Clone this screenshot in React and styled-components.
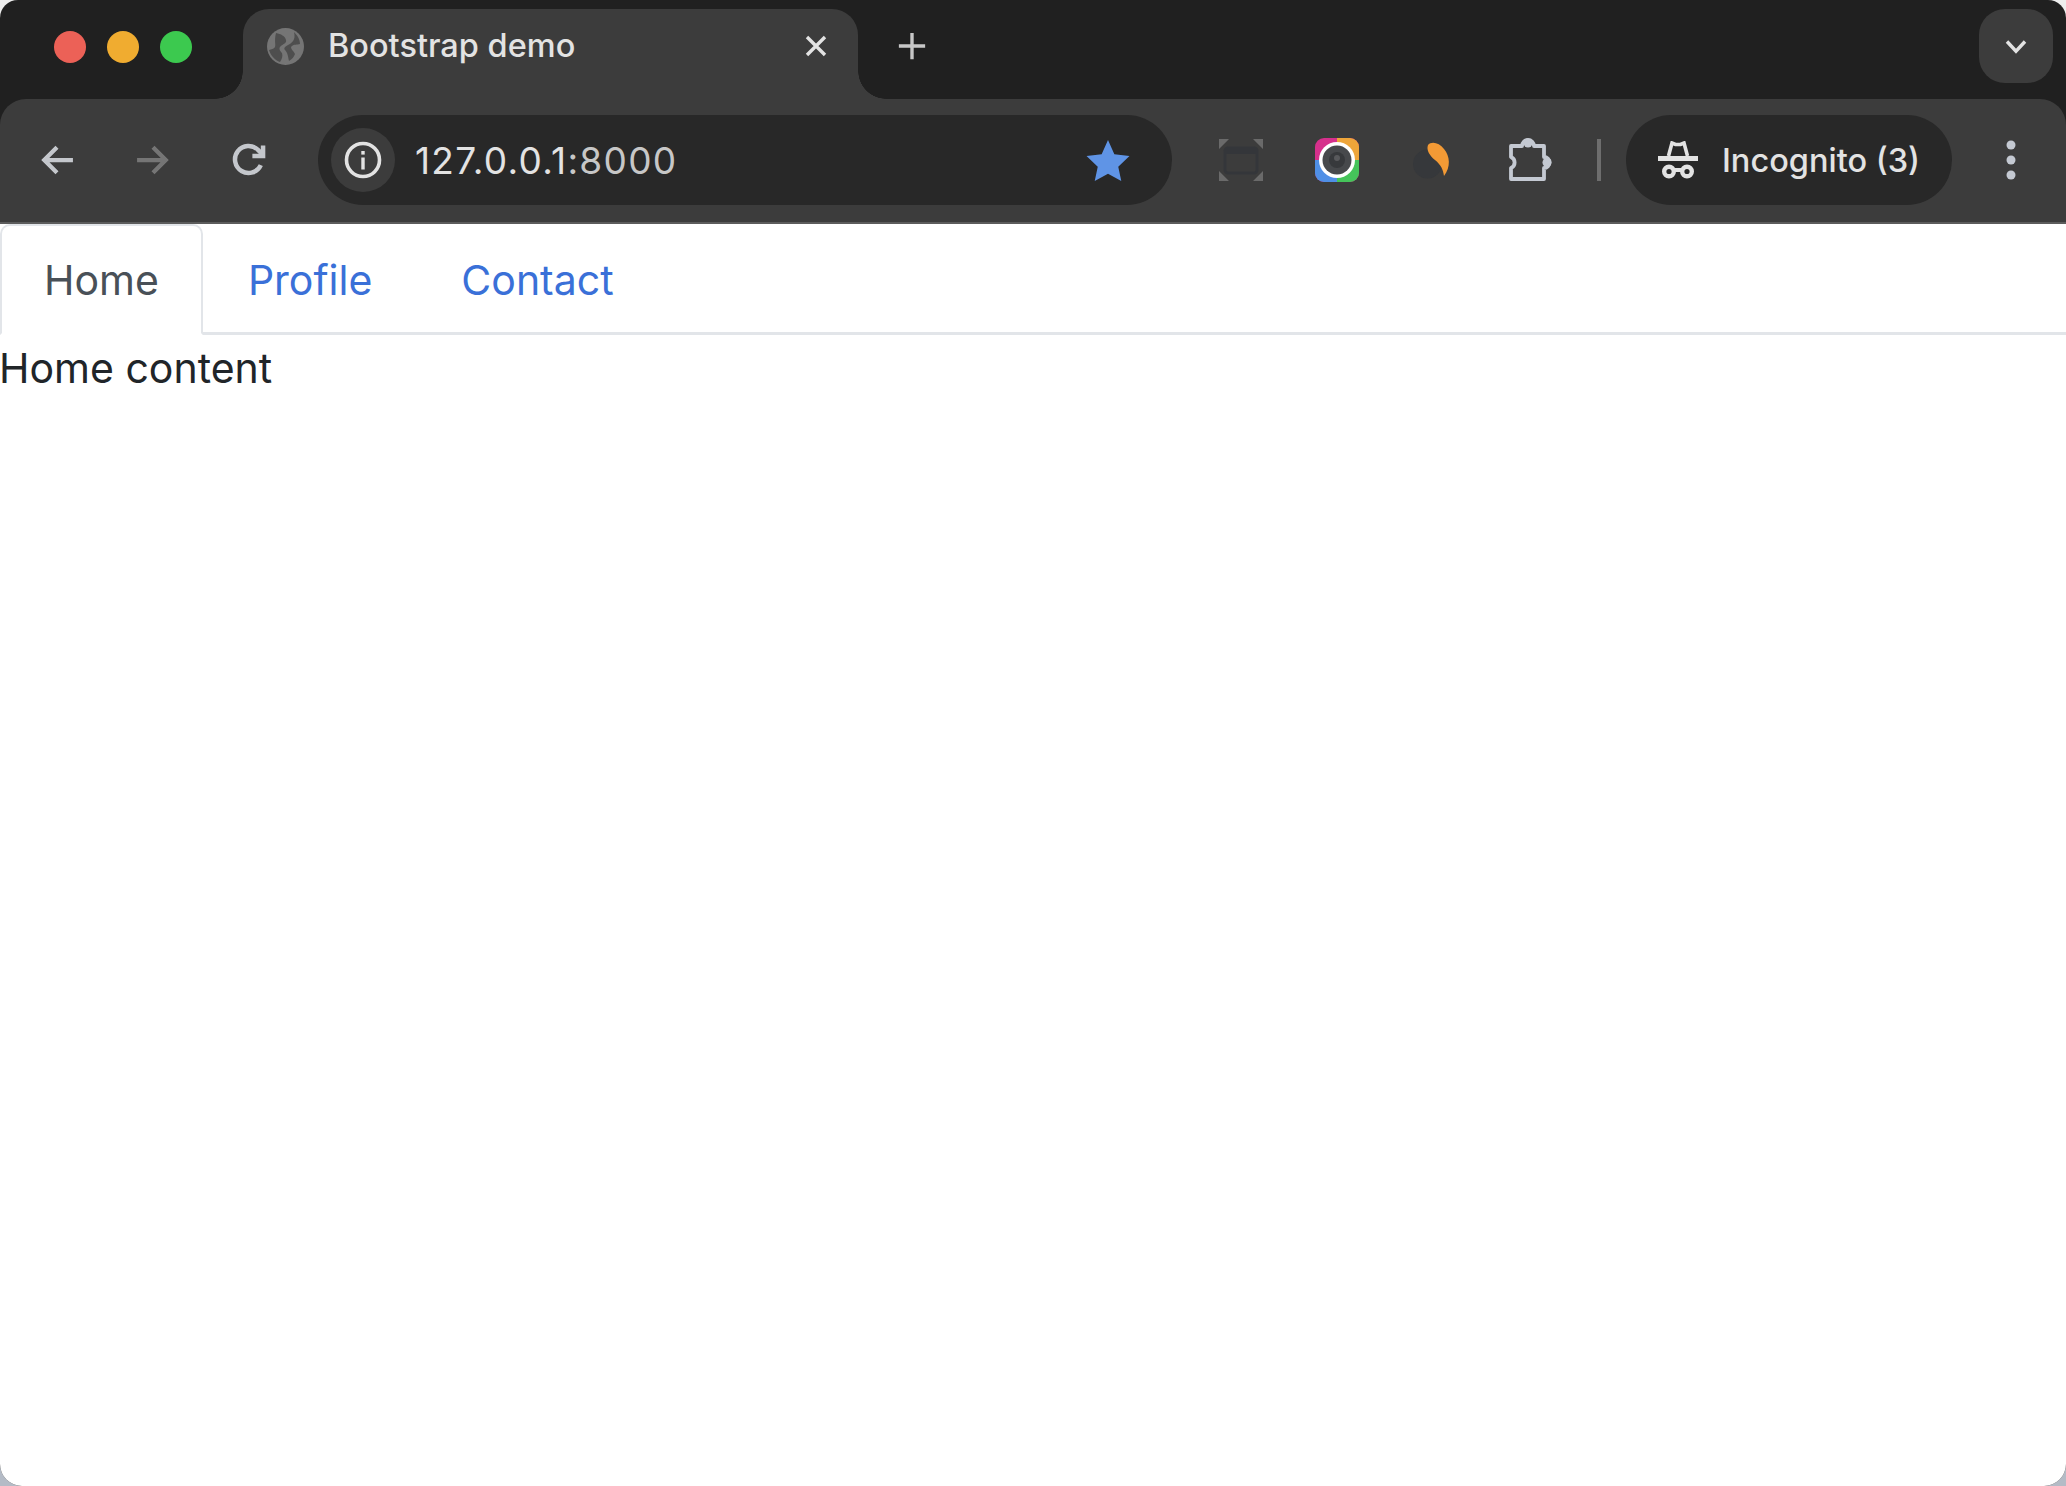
import React from "react";
import styled, { createGlobalStyle } from "styled-components";

const GlobalStyle = createGlobalStyle`
  html, body {
    margin: 0;
    padding: 0;
    height: 100%;
  }
  body {
    background: linear-gradient(#eeeeee, #eeeeee 50%, #b4bbc6 50%);
  }
  * { box-sizing: border-box; }
`;

const Window = styled.div`
  width: 2066px;
  height: 1486px;
  display: flex;
  flex-direction: column;
  background: #202020;
  border-radius: 18px 18px 22px 22px;
  overflow: hidden;
  font-family: Inter, "Liberation Sans", sans-serif;
`;

const TitleBar = styled.div`
  height: 99px;
  flex: none;
  display: flex;
  align-items: flex-start;
`;

const Lights = styled.div`
  width: 243px;
  height: 94px;
  padding-left: 54px;
  display: flex;
  align-items: center;
  gap: 21px;
`;

const Light = styled.span`
  width: 32px;
  height: 32px;
  border-radius: 50%;
  background: ${(props) => props.color};
`;

const Tab = styled.div`
  position: relative;
  width: 615px;
  height: 90px;
  margin-top: 9px;
  padding: 0 30px 16px 24px;
  display: flex;
  align-items: center;
  background: #3c3c3c;
  border-radius: 26px 26px 0 0;

  &::before,
  &::after {
    content: "";
    position: absolute;
    bottom: 0;
    width: 28px;
    height: 28px;
  }
  &::before {
    left: -28px;
    background: radial-gradient(circle at 0 0, #202020 27.5px, #3c3c3c 28px);
  }
  &::after {
    right: -28px;
    background: radial-gradient(circle at 100% 0, #202020 27.5px, #3c3c3c 28px);
  }
`;

const TabTitle = styled.span`
  flex: 1;
  margin: 0 0 2px 24px;
  color: #e3e3e3;
  font-size: 32.5px;
  font-weight: 500;
`;

const NewTab = styled.div`
  width: 64px;
  height: 74px;
  margin: 9px 0 0 22px;
  display: flex;
  align-items: center;
  justify-content: center;
  z-index: 1;
`;

const TabSearch = styled.div`
  width: 74px;
  height: 74px;
  margin: 9px 13px 0 auto;
  display: flex;
  align-items: center;
  justify-content: center;
  background: #3c3c3c;
  border-radius: 26px;
`;

const Toolbar = styled.div`
  height: 125px;
  flex: none;
  padding: 0 7px 1px 9px;
  display: flex;
  align-items: center;
  background: #3c3c3c;
  border-bottom: 2px solid #5c5c5c;
  border-radius: 26px 26px 0 0;
`;

const Slot = styled.div`
  width: 96px;
  height: 90px;
  flex: none;
  display: flex;
  align-items: center;
  justify-content: center;
`;

const Omnibox = styled.div`
  width: 854px;
  height: 90px;
  margin: 0 21px;
  padding: 0 42px 0 13px;
  display: flex;
  align-items: center;
  background: #282828;
  border-radius: 45px;
`;

const InfoChip = styled.div`
  width: 64px;
  height: 64px;
  flex: none;
  display: flex;
  align-items: center;
  justify-content: center;
  background: #3c3c3c;
  border-radius: 50%;
`;

const Url = styled.span`
  flex: 1;
  margin-left: 20px;
  font-size: 37px;
  letter-spacing: 1.3px;
  color: #c7c7c7;

  b {
    font-weight: 400;
    color: #e3e3e3;
  }
`;

const Divider = styled.span`
  width: 4px;
  height: 42px;
  margin: 0 25px 0 20px;
  flex: none;
  background: #6e6e6e;
`;

const IncognitoPill = styled.div`
  width: 326px;
  height: 90px;
  margin-right: 11px;
  flex: none;
  padding-left: 32px;
  display: flex;
  align-items: center;
  gap: 24px;
  background: #282828;
  border-radius: 45px;
  color: #e3e3e3;
  font-size: 32.5px;
  font-weight: 500;
`;

const Page = styled.main`
  flex: 1;
  background: #fff;
  font-size: 41px;
  color: #212529;
`;

const Nav = styled.ul`
  margin: 0;
  padding: 0;
  list-style: none;
  display: flex;
  gap: 1px;
  border-bottom: 3px solid #e2e5e9;
`;

const NavItem = styled.li`
  height: 111px;
  margin-bottom: -3px;
  padding: 22px 42px 0;
  line-height: 64px;
  color: ${(props) => (props.$active ? "#495057" : "#3a70d8")};
  background: ${(props) => (props.$active ? "#fff" : "transparent")};
  border: 2px solid ${(props) => (props.$active ? "#e2e5e9" : "transparent")};
  border-bottom-color: ${(props) => (props.$active ? "#fff" : "transparent")};
  border-radius: 10px 10px 0 0;
`;

const TabContent = styled.div`
  margin-left: -1px;
  line-height: 66px;
`;

const Icon = ({ size = 32, children, width = 4, color }) => (
  <svg width={size} height={size} viewBox="0 0 32 32" fill="none" stroke="currentColor" strokeWidth={width} style={{ color }}>
    {children}
  </svg>
);

export default function App() {
  return (
    <Window>
      <GlobalStyle />
      <TitleBar>
        <Lights>
          <Light color="#ec6157" />
          <Light color="#f0ac30" />
          <Light color="#3cc94f" />
        </Lights>
        <Tab>
          <svg width="37" height="37" viewBox="0 0 37 37">
            <circle cx="18.5" cy="18.5" r="18.5" fill="#757575" />
            <path d="M9 5c5 1 9 3 10 7 1 3-3 4-5 6-3 2-1 5 1 7 1 3 0 6-2 9-5-2-9-6-11-12 2-1 5-1 6-3 1-3-1-6 1-14zM27 4c3 3 6 7 6 12-3 1-6 0-8 2-3 2 2 5 3 8-1 3-3 5-6 7-1-4-1-8-4-11-2-2 1-4 3-5 4-2 8-5 6-13z" fill="#4e4e4e" />
          </svg>
          <TabTitle>Bootstrap demo</TabTitle>
          <Icon size={24} color="#e3e3e3" width={4.5}>
            <path d="M4 4l24 24M28 4L4 28" />
          </Icon>
        </Tab>
        <NewTab>
          <Icon size={30} color="#c7c7c7" width={3.6}>
            <path d="M16 2v28M2 16h28" />
          </Icon>
        </NewTab>
        <TabSearch>
          <Icon size={24} color="#e3e3e3" width={4.5}>
            <path d="M4 10l12 13L28 10" />
          </Icon>
        </TabSearch>
      </TitleBar>

      <Toolbar>
        <Slot>
          <Icon size={34} color="#c4c7cc">
            <path d="M31 16H5M16 4L4 16l12 12" />
          </Icon>
        </Slot>
        <Slot>
          <Icon size={34} color="#757575">
            <path d="M1 16h26M16 4l12 12-12 12" />
          </Icon>
        </Slot>
        <Slot>
          <Icon size={36} color="#c4c7cc">
            <path d="M26.5 20.5A12 12 0 1 1 24 7l4 4" />
            <path d="M28.5 3v9.500h-9.500" />
          </Icon>
        </Slot>
        <Omnibox>
          <InfoChip>
            <svg width="38" height="38" viewBox="0 0 38 38">
              <circle cx="19" cy="19" r="16.500" fill="none" stroke="#e3e3e3" strokeWidth="3.600" />
              <rect x="17.300" y="16.500" width="3.400" height="12" fill="#e3e3e3" />
              <rect x="17.300" y="10" width="3.400" height="3.600" fill="#e3e3e3" />
            </svg>
          </InfoChip>
          <Url>
            <b>127.0.0.1</b>:8000
          </Url>
          <svg width="44" height="41" viewBox="0 0 44 42">
            <path d="M22 0l6.500 14.500L44 16.500 32.500 27.300 35.600 42 22 34.500 8.400 42l3.100-14.700L0 16.500l15.500-2z" fill="#5f94e6" />
          </svg>
        </Omnibox>
        <Slot>
          <svg width="44" height="42" viewBox="0 0 44 42">
            <path d="M0 0h10L0 10zM44 0H34l10 10zM0 42V32l10 10zM44 42H34l10-10z" fill="#6a6a6a" />
            <rect x="6" y="9" width="32" height="25" rx="3" fill="none" stroke="#34363a" strokeWidth="3" />
            <rect x="6" y="9" width="32" height="6" fill="#34363a" />
          </svg>
        </Slot>
        <Slot>
          <svg width="44" height="44" viewBox="0 0 44 44">
            <rect width="44" height="44" rx="9" fill="#d6308c" />
            <path d="M22 22L22 0h13a9 9 0 0 1 9 9v13z" fill="#eea53a" />
            <path d="M22 22h22v13a9 9 0 0 1-9 9H22z" fill="#45c45a" />
            <path d="M22 22v22H9a9 9 0 0 1-9-9V22z" fill="#4f8fe6" />
            <circle cx="22" cy="22" r="18" fill="#fff" />
            <circle cx="22" cy="22" r="14.500" fill="#47494c" />
            <circle cx="22" cy="22" r="8" fill="#37393c" />
            <circle cx="22" cy="20" r="3" fill="#58595c" />
          </svg>
        </Slot>
        <Slot>
          <svg width="40" height="38" viewBox="0 0 40 38">
            <circle cx="14.500" cy="23" r="14.500" fill="#36383b" />
            <path d="M15 4C18 0 26 1 31 8c6 7 7 18 0 27-1-7-3-11-9-16C17 15 13 9 15 4z" fill="#f39a35" />
          </svg>
        </Slot>
        <Slot>
          <svg width="46" height="46" viewBox="0 0 46 46">
            <path d="M5 9h11a6 6 0 0 1 12 0h10v11a5.500 5.500 0 0 1 0 11v11H5V31a6 6 0 0 0 0-11z" fill="none" stroke="#c4c9d2" strokeWidth="3.800" strokeLinejoin="round" />
            <circle cx="22" cy="6" r="4.500" fill="#c4c9d2" />
            <circle cx="41" cy="25.500" r="4.500" fill="#c4c9d2" />
          </svg>
        </Slot>
        <Divider />
        <IncognitoPill>
          <svg width="40" height="38" viewBox="0 0 40 38">
            <path d="M0 17.500h40" stroke="#e3e3e3" strokeWidth="5" fill="none" />
            <path d="M10.500 15L14 2l3.500 1.500h5L26 2l3.500 13" stroke="#e3e3e3" strokeWidth="3.600" fill="none" />
            <circle cx="11" cy="30.500" r="4.800" stroke="#e3e3e3" strokeWidth="4.400" fill="none" />
            <circle cx="29" cy="30.500" r="4.800" stroke="#e3e3e3" strokeWidth="4.400" fill="none" />
            <path d="M14 29h12" stroke="#e3e3e3" strokeWidth="4" fill="none" />
          </svg>
          Incognito (3)
        </IncognitoPill>
        <Slot>
          <svg width="10" height="40" viewBox="0 0 10 40">
            <circle cx="5" cy="5" r="4.500" fill="#c4c9d2" />
            <circle cx="5" cy="20" r="4.500" fill="#c4c9d2" />
            <circle cx="5" cy="35" r="4.500" fill="#c4c9d2" />
          </svg>
        </Slot>
      </Toolbar>

      <Page>
        <Nav>
          <NavItem $active>Home</NavItem>
          <NavItem>Profile</NavItem>
          <NavItem>Contact</NavItem>
        </Nav>
        <TabContent>Home content</TabContent>
      </Page>
    </Window>
  );
}
